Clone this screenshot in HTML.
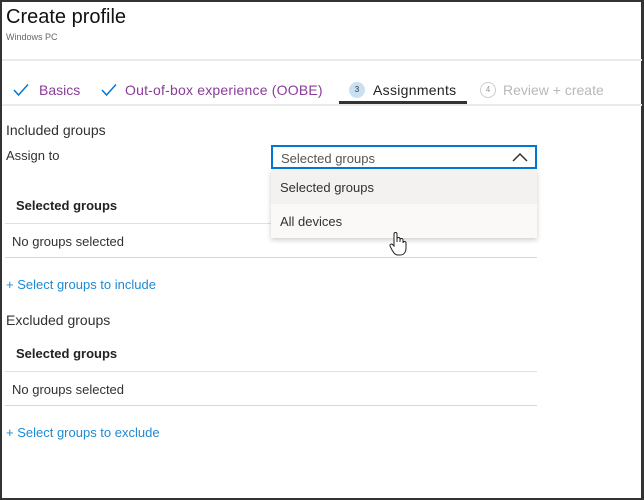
<!DOCTYPE html>
<html><head><meta charset="utf-8"><style>
*{margin:0;padding:0;box-sizing:border-box}
body{width:644px;height:500px;overflow:hidden;background:#fff;font-family:"Segoe UI","Liberation Sans",sans-serif;color:#323130;position:relative}
.frame{position:absolute;left:0;top:0;width:644px;height:500px;border:2px solid #333;border-right-width:3px;border-bottom-width:2px}
.a{position:absolute;white-space:nowrap}
.hl{position:absolute;height:1px;background:#e1dfdd}
</style></head><body>
<div class="frame"></div>
<div class="a" style="left:6px;top:6px;font-size:20px;color:#111">Create profile</div>
<div class="a" style="left:6px;top:32px;font-size:9px;color:#666">Windows PC</div>
<div class="hl" style="left:2px;top:59px;width:640px;height:2px;background:#ebebeb"></div>

<svg class="a" style="left:13px;top:83px" width="16" height="14" viewBox="0 0 16 14"><path d="M1 7 L5.5 12 L15 1.5" fill="none" stroke="#0078d4" stroke-width="1.5"/></svg>
<div class="a" style="left:39px;top:82px;font-size:14px;color:#8a3c9a">Basics</div>
<svg class="a" style="left:101px;top:83px" width="16" height="14" viewBox="0 0 16 14"><path d="M1 7 L5.5 12 L15 1.5" fill="none" stroke="#0078d4" stroke-width="1.5"/></svg>
<div class="a" style="left:125px;top:82px;font-size:14px;color:#8a3c9a;letter-spacing:0.2px">Out-of-box experience (OOBE)</div>
<div class="a" style="left:349px;top:82px;width:16px;height:16px;border-radius:50%;background:#c7e0f4;font-size:8px;text-align:center;line-height:16px;color:#333">3</div>
<div class="a" style="left:373px;top:82px;font-size:14px;color:#222;letter-spacing:0.3px">Assignments</div>
<div class="a" style="left:480px;top:82px;width:16px;height:16px;border-radius:50%;border:1px solid #ccc;font-size:8px;text-align:center;line-height:14px;color:#999">4</div>
<div class="a" style="left:503px;top:82px;font-size:14px;color:#b8b8b8">Review + create</div>
<div class="a" style="left:339px;top:101px;width:128px;height:3px;background:#333"></div>
<div class="hl" style="left:2px;top:104px;width:640px;height:2px;background:#ebebeb"></div>

<div class="a" style="left:6px;top:122px;font-size:14px">Included groups</div>
<div class="a" style="left:6px;top:148px;font-size:13px">Assign to</div>

<div class="a" style="left:16px;top:198px;font-size:13px;font-weight:bold;color:#222">Selected groups</div>
<div class="hl" style="left:5px;top:223px;width:532px"></div>
<div class="a" style="left:12px;top:234px;font-size:13px">No groups selected</div>
<div class="hl" style="left:5px;top:257px;width:532px;background:#d6d6d6"></div>
<div class="a" style="left:6px;top:277px;font-size:13px;color:#1f8ad2">+ Select groups to include</div>
<div class="a" style="left:6px;top:312px;font-size:14px">Excluded groups</div>
<div class="a" style="left:16px;top:346px;font-size:13px;font-weight:bold;color:#222">Selected groups</div>
<div class="hl" style="left:5px;top:371px;width:532px"></div>
<div class="a" style="left:12px;top:382px;font-size:13px">No groups selected</div>
<div class="hl" style="left:5px;top:405px;width:532px;background:#d6d6d6"></div>
<div class="a" style="left:6px;top:425px;font-size:13px;color:#1f8ad2">+ Select groups to exclude</div>

<div class="a" style="left:271px;top:145px;width:266px;height:24px;border:2px solid #0078d4;background:#fff"></div>
<div class="a" style="left:281px;top:151px;font-size:13px;color:#555">Selected groups</div>
<svg class="a" style="left:512px;top:152px" width="16" height="10" viewBox="0 0 16 10"><path d="M1 9 L8 2 L15 9" fill="none" stroke="#333" stroke-width="1.5"/></svg>
<div class="a" style="left:271px;top:170px;width:266px;height:68px;background:#fff;box-shadow:0 2px 5px rgba(0,0,0,.2)">
<div style="height:34px;background:#f3f2f1;padding:10px 0 0 9px;font-size:13px">Selected groups</div>
<div style="height:34px;padding:10px 0 0 9px;font-size:13px;background:#faf9f8">All devices</div>
</div>
<svg class="a" style="left:389px;top:231px" width="18" height="26" viewBox="0 0 18 26"><path d="M5 13 V3 a1.5 1.5 0 0 1 3 0 V11 V8 a1.5 1.5 0 0 1 3 0 V11 V9 a1.5 1.5 0 0 1 3 0 V12 a1.5 1.5 0 0 1 3 0 V17 c0 4-2 7-6 7 h-2 c-3 0-4-2-6-5 L1 15 a1.5 1.5 0 0 1 2.5-1.5 L5 15 Z" fill="#fff" stroke="#222" stroke-width="1"/></svg>
</body></html>
